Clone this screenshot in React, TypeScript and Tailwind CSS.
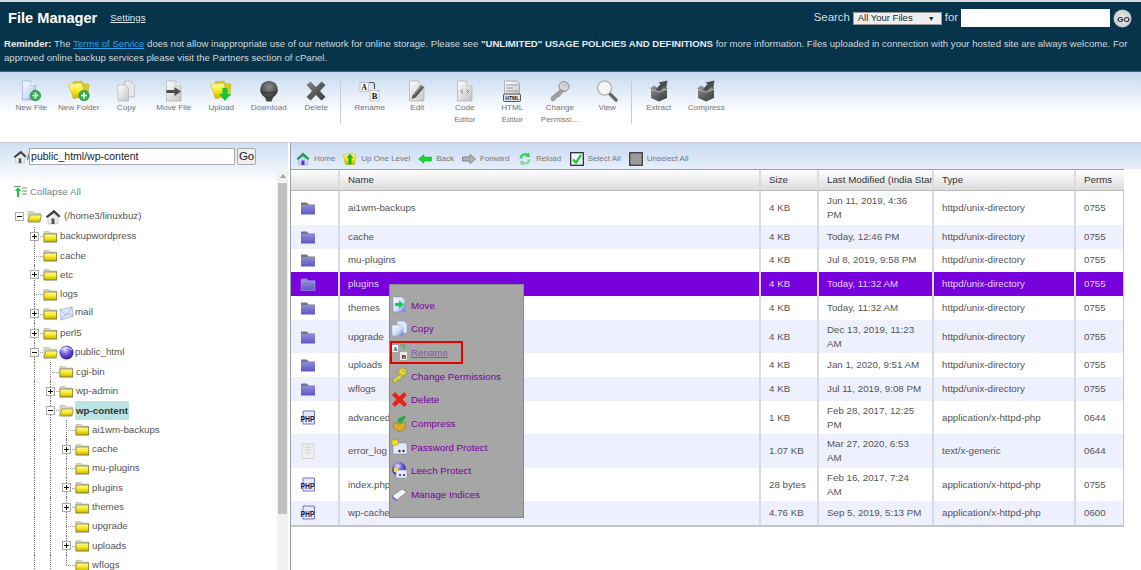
import type { ReactNode } from 'react';

const FONT = "font-['Liberation_Sans',Arial,sans-serif]";

function Defs() {
  return (
    <svg width="0" height="0" className="absolute">
      <defs>
        <linearGradient id="yel" x1="0" y1="0" x2="0" y2="1">
          <stop offset="0" stopColor="#fffbb0" />
          <stop offset="0.5" stopColor="#f6ea1c" />
          <stop offset="1" stopColor="#c9ae00" />
        </linearGradient>
        <linearGradient id="gry" x1="0" y1="0" x2="1" y2="1">
          <stop offset="0" stopColor="#8c8c8c" />
          <stop offset="0.5" stopColor="#5a5a5a" />
          <stop offset="1" stopColor="#3f3f3f" />
        </linearGradient>
        <linearGradient id="pap" x1="0" y1="0" x2="1" y2="1">
          <stop offset="0" stopColor="#ffffff" />
          <stop offset="1" stopColor="#c4c4c4" />
        </linearGradient>
        <linearGradient id="blupap" x1="0" y1="0" x2="1" y2="1">
          <stop offset="0" stopColor="#ffffff" />
          <stop offset="0.6" stopColor="#cfdcf6" />
          <stop offset="1" stopColor="#5a6fd0" />
        </linearGradient>
        <linearGradient id="pur" x1="0" y1="0" x2="0" y2="1">
          <stop offset="0" stopColor="#8d8ae0" />
          <stop offset="1" stopColor="#5f58bf" />
        </linearGradient>
        <radialGradient id="globe" cx="0.4" cy="0.3" r="0.8">
          <stop offset="0" stopColor="#dfe4ff" />
          <stop offset="0.45" stopColor="#6d55d8" />
          <stop offset="1" stopColor="#2d0d91" />
        </radialGradient>
        <radialGradient id="ball" cx="0.5" cy="0.35" r="0.7">
          <stop offset="0" stopColor="#8a8a8a" />
          <stop offset="1" stopColor="#303030" />
        </radialGradient>
        <radialGradient id="gobtn" cx="0.5" cy="0.5" r="0.6">
          <stop offset="0" stopColor="#ececec" />
          <stop offset="0.75" stopColor="#c9d2d4" />
          <stop offset="1" stopColor="#7f9ea8" />
        </radialGradient>
      </defs>
    </svg>
  );
}

function PlusBadge({ cx, cy }: { cx: number; cy: number }) {
  return (
    <g>
      <circle cx={cx} cy={cy} r="5.2" fill="#2fb24a" stroke="#1d7d33" strokeWidth="0.6" />
      <path d={`M${cx - 3} ${cy}h6M${cx} ${cy - 3}v6`} stroke="#fff" strokeWidth="1.7" />
    </g>
  );
}

function Page({ fill = 'url(#pap)', stroke = '#a5a5a5' }: { fill?: string; stroke?: string }) {
  return (
    <g>
      <path d="M3.500 1h9.500l5 5v15H3.500z" fill={fill} stroke={stroke} strokeWidth="0.6" />
      <path d="M13 1v5h5" fill="#eee" stroke={stroke} strokeWidth="0.5" />
    </g>
  );
}

function YellowFolder() {
  return (
    <g>
      <path d="M5 1.500L14 1l1 2.500 6 .500-1 12H7z" fill="#d8c930" stroke="#b5a410" strokeWidth="0.4" />
      <path d="M.500 4.500l13-1.500 4 12.500-12 3.500z" fill="url(#yel)" stroke="#c0ad10" strokeWidth="0.4" />
    </g>
  );
}

function ToolIcon({ name }: { name: string }) {
  const common = { width: 22, height: 22, viewBox: '0 0 22 22' };
  switch (name) {
    case 'newfile':
      return (
        <svg {...common}>
          <path d="M2.500 1h8.500l4.500 4.500V20h-13z" fill="url(#blupap)" stroke="#8795d8" strokeWidth="0.6" />
          <path d="M11 1v4.500h4.500" fill="#fff" stroke="#8795d8" strokeWidth="0.5" />
          <PlusBadge cx={15.5} cy={15.5} />
        </svg>
      );
    case 'newfolder':
      return (
        <svg {...common}>
          <YellowFolder />
          <PlusBadge cx={16} cy={15.5} />
        </svg>
      );
    case 'copy':
      return (
        <svg {...common}>
          <path d="M9.500 1h6l4 4v12h-10z" fill="#e7e7e7" stroke="#aaa" strokeWidth="0.6" />
          <path d="M3 5h7l3.500 3.500V21H3z" fill="url(#pap)" stroke="#aaa" strokeWidth="0.6" />
        </svg>
      );
    case 'move':
      return (
        <svg {...common}>
          <Page />
          <path d="M3.500 10h8V7l6.500 4.500L11.500 16v-3h-8z" fill="#4d4d4d" />
        </svg>
      );
    case 'upload':
      return (
        <svg {...common}>
          <YellowFolder />
          <path d="M12.500 8h5v6h3.500l-6 7-6-7h3.500z" fill="#19c43a" />
        </svg>
      );
    case 'download':
      return (
        <svg {...common}>
          <path d="M6 15h10l-2.500 6.500h-5z" fill="#444" />
          <circle cx="11" cy="9.500" r="8.800" fill="url(#ball)" />
          <path d="M2.500 11c3 2.500 14 2.500 17 0" stroke="#2b2b2b" strokeWidth="1" fill="none" />
        </svg>
      );
    case 'delete':
      return (
        <svg {...common}>
          <path d="M1.500 5l4-3.500L11 7l5.500-5.500 4 3.500-5.500 6 5.500 6-4 3.500L11 15l-5.500 5.500-4-3.500 5.500-6z" fill="url(#gry)" />
        </svg>
      );
    case 'rename':
      return (
        <svg {...common}>
          <rect x="1" y="2.500" width="8.500" height="9" fill="#f6f6f6" stroke="#999" strokeWidth="0.5" />
          <rect x="11" y="10.500" width="9" height="10.500" fill="#f6f6f6" stroke="#999" strokeWidth="0.5" />
          <path d="M10 2.500h3.500c1.500 0 2 1 2 2V9" fill="none" stroke="#555" strokeWidth="1.200" />
          <text x="2.500" y="9.500" fontSize="7.500" fontWeight="700" fill="#111" fontFamily="Liberation Serif">A</text>
          <text x="12.800" y="18.800" fontSize="8.500" fontWeight="700" fill="#111" fontFamily="Liberation Serif">B</text>
        </svg>
      );
    case 'edit':
      return (
        <svg {...common}>
          <Page />
          <path d="M5.500 19l1.200-4L15 5l3 2.500-8.300 10z" fill="#555" />
          <path d="M7.800 15l8-9" stroke="#ddd" strokeWidth="0.7" />
        </svg>
      );
    case 'code':
      return (
        <svg {...common}>
          <Page />
          <path d="M9 9.500l-2.200 2 2.200 2M12.500 9.500l2.200 2-2.200 2" fill="none" stroke="#666" strokeWidth="0.9" />
        </svg>
      );
    case 'html':
      return (
        <svg {...common}>
          <path d="M3.500 1h13l2 3v12h-15z" fill="url(#pap)" stroke="#888" strokeWidth="0.6" />
          <path d="M5 5h12M5 8h7M5 11h12" stroke="#888" strokeWidth="0.8" />
          <rect x="2.500" y="14" width="17" height="7.500" rx="1.200" fill="#e6e6e6" stroke="#444" strokeWidth="0.9" />
          <text x="4.300" y="19.800" fontSize="5" fontWeight="700" fill="#222" fontFamily="Liberation Sans">HTML</text>
        </svg>
      );
    case 'perm':
      return (
        <svg {...common}>
          <circle cx="15" cy="6.500" r="5" fill="#d5d5d5" stroke="#777" strokeWidth="0.8" />
          <circle cx="16.500" cy="5" r="1.300" fill="#fff" stroke="#777" strokeWidth="0.5" />
          <path d="M11.500 9.500L2 17.500l1 3.500 3-1 1-2.500 2.500-.5 5.500-6z" fill="#a0a0a0" stroke="#777" strokeWidth="0.6" />
        </svg>
      );
    case 'view':
      return (
        <svg {...common}>
          <path d="M13.500 13.500l6.500 6.500" stroke="#666" strokeWidth="3.400" strokeLinecap="round" />
          <circle cx="8.500" cy="8" r="7" fill="#f5f5f5" stroke="#b5b5b5" strokeWidth="1.400" />
        </svg>
      );
    default:
      return (
        <svg {...common}>
          <path d="M3 9.500l8 3 8-3v8.500l-8 3.500-8-3.500z" fill="url(#gry)" />
          <path d="M2 8.500l4-3 5 3 4-3 5 3-9 4z" fill="#8b8b8b" />
          <path d="M7.500 10l5-6-2-1.500 9-2-1.500 8.500-2-2-4 4z" fill="#4e4e4e" />
        </svg>
      );
  }
}

const tools1 = [
  ['newfile', 'New File'],
  ['newfolder', 'New Folder'],
  ['copy', 'Copy'],
  ['move', 'Move File'],
  ['upload', 'Upload'],
  ['download', 'Download'],
  ['delete', 'Delete'],
];
const tools2 = [
  ['rename', 'Rename'],
  ['edit', 'Edit'],
  ['code', 'Code|Editor'],
  ['html', 'HTML|Editor'],
  ['perm', 'Change|Permissi...'],
  ['view', 'View'],
];
const tools3 = [
  ['extract', 'Extract'],
  ['compress', 'Compress'],
];

function ToolGroup({ items }: { items: string[][] }) {
  return (
    <>
      {items.map(([icon, label]) => (
        <div key={label} className="flex w-[47.5px] flex-col items-center">
          <div className="flex h-[22px] w-[22px] items-center justify-center">
            <ToolIcon name={icon} />
          </div>
          {label.split('|').map((line) => (
            <div key={line} className="w-[47.5px] whitespace-nowrap text-center text-[8.125px] leading-[12px] text-[#777]">
              {line}
            </div>
          ))}
        </div>
      ))}
    </>
  );
}

function Folder({ open = false }: { open?: boolean }) {
  return (
    <svg width="15" height="13" viewBox="0 0 15 13" className="shrink-0">
      <path d="M1 3V1.500h5L7.500 3h6v9H1z" fill="#d9d9b5" stroke="#a5a58c" strokeWidth="0.5" />
      {open ? (
        <path d="M.8 12L3 5h11.500L12.500 12z" fill="url(#yel)" stroke="#8c8450" strokeWidth="0.7" />
      ) : (
        <rect x="1" y="4" width="12.700" height="8" fill="url(#yel)" stroke="#6f6a3a" strokeWidth="0.7" />
      )}
    </svg>
  );
}

function Toggle({ kind }: { kind: 'plus' | 'minus' }) {
  return (
    <div className="flex h-[9px] w-[9px] items-center justify-center border border-[#aaa] bg-white">
      <svg width="7" height="7" viewBox="0 0 7 7">
        <path d={kind === 'plus' ? 'M1 3.500h5M3.500 1v5' : 'M1 3.500h5'} stroke="#111" strokeWidth="1" />
      </svg>
    </div>
  );
}

function Guide() {
  return (
    <div className="flex h-full w-4 shrink-0 justify-center">
      <div className="h-full border-l border-dotted border-[#777]" />
    </div>
  );
}

function TreeRow({ depth, kind, label, last = false, open = false, active = false, raised = false, extra }: {
  depth: number;
  kind: 'plus' | 'minus' | 'none';
  label: string;
  last?: boolean;
  open?: boolean;
  active?: boolean;
  raised?: boolean;
  extra?: ReactNode;
}) {
  return (
    <div className="flex h-[19.35px] items-center">
      {Array.from({ length: depth }).map((_, i) => (
        <Guide key={i} />
      ))}
      <div className="relative flex h-full w-4 shrink-0 items-center justify-center">
        <div className={`absolute left-[7.5px] top-0 border-l border-dotted border-[#777] ${last ? 'h-1/2' : 'h-full'}`} />
        <div className="absolute left-[8px] top-1/2 w-[9px] border-t border-dotted border-[#999]" />
        {kind !== 'none' && (
          <div className="relative">
            <Toggle kind={kind} />
          </div>
        )}
      </div>
      <div className="ml-[1px] flex items-center">
        <Folder open={open} />
      </div>
      {extra}
      <span
        className={`text-[9.75px] ${raised ? '-mt-[3px]' : ''} ${
          active
            ? 'ml-[1px] h-[19px] rounded-[1px] bg-[#bce3e3] px-[1px] font-bold leading-[19px] text-[#333]'
            : extra
              ? 'ml-[1px] leading-[14px] text-[#555]'
              : 'ml-[2px] leading-[14px] text-[#555]'
        }`}
      >
        {label}
      </span>
    </div>
  );
}

const treeRows = [
  { depth: 0, kind: 'plus', label: 'backupwordpress' },
  { depth: 0, kind: 'none', label: 'cache' },
  { depth: 0, kind: 'plus', label: 'etc' },
  { depth: 0, kind: 'none', label: 'logs' },
  { depth: 0, kind: 'plus', label: 'mail', extra: 'mail' },
  { depth: 0, kind: 'plus', label: 'perl5' },
  { depth: 0, kind: 'minus', label: 'public_html', open: true, extra: 'globe' },
  { depth: 1, kind: 'none', label: 'cgi-bin' },
  { depth: 1, kind: 'plus', label: 'wp-admin' },
  { depth: 1, kind: 'minus', label: 'wp-content', open: true, active: true },
  { depth: 2, kind: 'none', label: 'ai1wm-backups' },
  { depth: 2, kind: 'plus', label: 'cache' },
  { depth: 2, kind: 'none', label: 'mu-plugins' },
  { depth: 2, kind: 'plus', label: 'plugins' },
  { depth: 2, kind: 'plus', label: 'themes' },
  { depth: 2, kind: 'none', label: 'upgrade' },
  { depth: 2, kind: 'plus', label: 'uploads' },
  { depth: 2, kind: 'none', label: 'wflogs', last: true },
] as const;

function House({ size = 14 }: { size?: number }) {
  return (
    <svg width={size} height={size} viewBox="0 0 16 16" className="shrink-0">
      <path d="M3 8l5-4 5 4v7H3z" fill="#ececec" stroke="#aaa" strokeWidth="0.5" />
      <path d="M9 .800L.800 7.500l1.400 1.500L9 4l5 4.500 1.500-1.500z" fill="#3f3f3f" />
      <rect x="6.500" y="9.500" width="3" height="5.500" fill="#555" />
    </svg>
  );
}

function Envelope() {
  return (
    <svg width="15" height="15" viewBox="0 0 16 16" className="ml-[1px] shrink-0">
      <path d="M1 4l13-3 1 10-13 4z" fill="#dfe6f5" stroke="#98a6c9" strokeWidth="0.7" />
      <path d="M1 4l7 6 6-9M2 15l5-6M15 11L9 8" fill="none" stroke="#98a6c9" strokeWidth="0.7" />
    </svg>
  );
}

function Globe() {
  return (
    <svg width="15" height="15" viewBox="0 0 15 15" className="ml-[1px] shrink-0">
      <circle cx="7.500" cy="7.500" r="7" fill="url(#globe)" />
      <path d="M2 5c3-3 8-3 11 0" fill="none" stroke="#fff" strokeWidth="1" opacity="0.8" />
    </svg>
  );
}

function NavIcon({ name }: { name: string }) {
  const common = { width: 14, height: 14, viewBox: '0 0 14 14' };
  switch (name) {
    case 'home':
      return (
        <svg {...common}>
          <path d="M2.500 7.500L7 4l4.500 3.500V13h-9z" fill="#cfd5f2" stroke="#8d95cc" strokeWidth="0.5" />
          <path d="M7 .500L.500 6.500 2 8l5-4 5 4 1.500-1.500z" fill="#1f9e57" />
          <rect x="5.500" y="8.500" width="3" height="4.500" fill="#4b39c9" />
        </svg>
      );
    case 'up':
      return (
        <svg {...common}>
          <path d="M.500 3l7-2 5 2-1 9.500h-9z" fill="url(#yel)" stroke="#b9a400" strokeWidth="0.5" />
          <path d="M7 1.500l3.500 4.500H8.500v6.500h-3V6H3.500z" fill="#15b52f" />
        </svg>
      );
    case 'back':
      return (
        <svg {...common}>
          <path d="M.500 7L6 2.500V5h7.500v4H6v2.500z" fill="#0fdc2a" stroke="#0a9b1e" strokeWidth="0.4" />
        </svg>
      );
    case 'forward':
      return (
        <svg {...common}>
          <path d="M13.500 7L8 2.500V5H.500v4H8v2.500z" fill="#b3b3b3" stroke="#666" strokeWidth="0.7" />
        </svg>
      );
    case 'reload':
      return (
        <svg {...common}>
          <path d="M1.500 6.500c0-3.500 3.500-6 8-5L11 .500 12 5H7.500l1-1.500C6 3 4 4 4 6.500z" fill="#2ed060" />
          <path d="M12.500 7.500c0 3.500-3.500 6-8 5L3 13.500 2 9h4.500l-1 1.500c2.500.5 4.500-.5 4.500-3z" fill="#7fdf9c" />
        </svg>
      );
    case 'check':
      return (
        <svg {...common}>
          <rect x=".7" y=".7" width="12.600" height="12.600" fill="#f1f3fb" stroke="#222" strokeWidth="1.200" />
          <path d="M3 7.500l3 3 5-7.500" fill="none" stroke="#12c92c" strokeWidth="2.200" />
        </svg>
      );
    default:
      return (
        <svg {...common}>
          <rect x=".7" y=".7" width="12.600" height="12.600" fill="#9a9a9a" stroke="#333" strokeWidth="1.200" />
        </svg>
      );
  }
}

const navItems = [
  ['home', 'Home', 'mr-[8px]'],
  ['up', 'Up One Level', 'mr-[8px]'],
  ['back', 'Back', 'mr-[8px]'],
  ['forward', 'Forward', 'mr-[8.5px]'],
  ['reload', 'Reload', 'mr-[8.5px]'],
  ['check', 'Select All', 'mr-[8px]'],
  ['box', 'Unselect All', ''],
];

function RowIcon({ type, selected }: { type: string; selected?: boolean }) {
  if (type === 'folder') {
    return (
      <svg width="16" height="14" viewBox="0 0 16 14">
        <path d="M1 13V1.500h6l1.500 2H15V13z" fill={selected ? '#8f86c9' : '#777'} />
        <rect x="1" y="4" width="14" height="9.500" fill="url(#pur)" stroke={selected ? '#a9a2de' : 'none'} strokeWidth="0.6" />
      </svg>
    );
  }
  if (type === 'php') {
    return (
      <svg width="16" height="16" viewBox="0 0 16 16">
        <path d="M3 1h11.500v13H3z" fill="#e7e9fb" stroke="#6f76d5" strokeWidth="1" />
        <text x=".5" y="11.500" fontSize="8.500" fontWeight="700" fill="#14184f" fontFamily="Liberation Sans" textLength="14" lengthAdjust="spacingAndGlyphs">PHP</text>
      </svg>
    );
  }
  return (
    <svg width="16" height="16" viewBox="0 0 16 16">
      <rect x="2" y="1" width="12" height="14.500" fill="#efefef" stroke="#d2d2d2" strokeWidth="0.9" />
      <path d="M5 4h6M5 7h6M5 10h6" stroke="#cfcfcf" strokeWidth="1" />
    </svg>
  );
}

const files = [
  { icon: 'folder', name: 'ai1wm-backups', size: '4 KB', date: 'Jun 11, 2019, 4:36 PM', type: 'httpd/unix-directory', perms: '0755', h: 'h-[34px]' },
  { icon: 'folder', name: 'cache', size: '4 KB', date: 'Today, 12:46 PM', type: 'httpd/unix-directory', perms: '0755', h: 'h-[23.5px]' },
  { icon: 'folder', name: 'mu-plugins', size: '4 KB', date: 'Jul 8, 2019, 9:58 PM', type: 'httpd/unix-directory', perms: '0755', h: 'h-[23.5px]' },
  { icon: 'folder', name: 'plugins', size: '4 KB', date: 'Today, 11:32 AM', type: 'httpd/unix-directory', perms: '0755', h: 'h-[24px]', selected: true },
  { icon: 'folder', name: 'themes', size: '4 KB', date: 'Today, 11:32 AM', type: 'httpd/unix-directory', perms: '0755', h: 'h-[24px]' },
  { icon: 'folder', name: 'upgrade', size: '4 KB', date: 'Dec 13, 2019, 11:23 AM', type: 'httpd/unix-directory', perms: '0755', h: 'h-[33px]' },
  { icon: 'folder', name: 'uploads', size: '4 KB', date: 'Jan 1, 2020, 9:51 AM', type: 'httpd/unix-directory', perms: '0755', h: 'h-[24px]' },
  { icon: 'folder', name: 'wflogs', size: '4 KB', date: 'Jul 11, 2019, 9:08 PM', type: 'httpd/unix-directory', perms: '0755', h: 'h-[24px]' },
  { icon: 'php', name: 'advanced-cache.php', size: '1 KB', date: 'Feb 28, 2017, 12:25 PM', type: 'application/x-httpd-php', perms: '0644', h: 'h-[33px]' },
  { icon: 'txt', name: 'error_log', size: '1.07 KB', date: 'Mar 27, 2020, 6:53 AM', type: 'text/x-generic', perms: '0644', h: 'h-[34px]' },
  { icon: 'php', name: 'index.php', size: '28 bytes', date: 'Feb 16, 2017, 7:24 AM', type: 'application/x-httpd-php', perms: '0755', h: 'h-[33px]' },
  { icon: 'php', name: 'wp-cache-config.php', size: '4.76 KB', date: 'Sep 5, 2019, 5:13 PM', type: 'application/x-httpd-php', perms: '0600', h: 'h-[24px]' },
];

const GRID = 'grid grid-cols-[47px_421px_58px_115px_142px_50px]';
const CELL = 'flex h-full items-center whitespace-nowrap border-l-2 border-[#d9d9e6] pl-[8px]';

function MenuIcon({ name }: { name: string }) {
  const common = { width: 17, height: 17, viewBox: '0 0 17 17' };
  switch (name) {
    case 'move':
      return (
        <svg {...common}>
          <path d="M2 1h9l3 3v12H2z" fill="url(#blupap)" stroke="#7f8fd8" strokeWidth="0.6" />
          <path d="M4 7h4V4.500l5 4-5 4V10H4z" fill="#0fd24a" />
        </svg>
      );
    case 'copy':
      return (
        <svg {...common}>
          <path d="M6 1h7l3 3v9H6z" fill="#dfe8fb" stroke="#8d9de0" strokeWidth="0.6" />
          <path d="M1 5h8l3 3v8H1z" fill="url(#blupap)" stroke="#8d9de0" strokeWidth="0.6" />
        </svg>
      );
    case 'rename':
      return (
        <svg {...common}>
          <rect x="1" y="1" width="6" height="7" fill="#fff" />
          <rect x="9" y="8" width="7" height="8" fill="#e9e9e9" />
          <path d="M9 1h4v4" fill="none" stroke="#22b455" strokeWidth="1.200" />
          <text x="2" y="7" fontSize="6" fontWeight="700" fill="#222" fontFamily="Liberation Serif">A</text>
          <text x="10.500" y="14.500" fontSize="7" fontWeight="700" fill="#222" fontFamily="Liberation Serif">B</text>
        </svg>
      );
    case 'perm':
      return (
        <svg {...common}>
          <circle cx="11.500" cy="5" r="4" fill="#e8d437" stroke="#8c7b10" strokeWidth="0.5" />
          <circle cx="12.500" cy="4" r="1" fill="#a6a6a6" />
          <path d="M9 7.500L2 13l1 3 2.500-1 .5-2 2-.5 4-4z" fill="#efdd35" stroke="#8c7b10" strokeWidth="0.5" />
        </svg>
      );
    case 'delete':
      return (
        <svg {...common}>
          <path d="M1 4l3-3 4.500 4.500L13 1l3 3-4.500 4.500L16 13l-3 3-4.500-4.500L4 16l-3-3 4.500-4.500z" fill="#e52417" />
        </svg>
      );
    case 'compress':
      return (
        <svg {...common}>
          <path d="M2 7l6.500 2L15 7l-1 7-5.500 2.500L3 14z" fill="#d6ad2c" stroke="#8a6a10" strokeWidth="0.5" />
          <path d="M6 7c1-4 4-6 9-6l-2 4-3 3z" fill="#1faf3c" />
        </svg>
      );
    case 'password':
      return (
        <svg {...common}>
          <rect x="2" y="5" width="14" height="11" rx="1.500" fill="#e5eafa" stroke="#7f8bc5" strokeWidth="0.6" />
          <circle cx="8.500" cy="13" r="1.200" fill="#333" />
          <circle cx="12.500" cy="13" r="1.200" fill="#333" />
          <rect x="1" y="2" width="6" height="5" fill="#f1e62d" stroke="#9b8f10" strokeWidth="0.5" />
        </svg>
      );
    case 'leech':
      return (
        <svg {...common}>
          <circle cx="8" cy="7" r="7" fill="url(#globe)" />
          <rect x="5" y="8" width="11" height="8" rx="1" fill="#e5eafa" stroke="#7f8bc5" strokeWidth="0.6" />
          <circle cx="9" cy="13" r="1.100" fill="#333" />
          <circle cx="13" cy="13" r="1.100" fill="#333" />
          <rect x="3" y="6" width="4" height="4" fill="#f1e62d" />
        </svg>
      );
    default:
      return (
        <svg {...common}>
          <path d="M1 10l10-7 5 3-10 8z" fill="#f2f2f2" stroke="#666" strokeWidth="0.6" />
          <path d="M1 10l5 4v1.500L1 12z" fill="#7c5fd0" />
        </svg>
      );
  }
}

const menuItems = [
  ['move', 'Move'],
  ['copy', 'Copy'],
  ['rename', 'Rename'],
  ['perm', 'Change Permissions'],
  ['delete', 'Delete'],
  ['compress', 'Compress'],
  ['password', 'Password Protect'],
  ['leech', 'Leech Protect'],
  ['index', 'Manage Indices'],
];

export default function App() {
  return (
    <div className={`${FONT} relative h-[570px] w-[1141px] overflow-hidden bg-white`}>
      <Defs />

      {/* top banner */}
      <div className="h-[72px] border-b border-t-2 border-b-[#3d6374] border-t-[#d8dcdf] bg-[#07344a]">
        <div className="flex h-[30px] items-center justify-between pl-[8px] pr-[9px] pt-[2px]">
          <div className="flex items-center">
            <span className="text-[14.625px] font-bold leading-[18px] text-white">File Manager</span>
            <a className="ml-[13px] text-[9.75px] text-[#dde6ea] underline">Settings</a>
          </div>
          <div className="flex items-center text-[11.375px] text-[#d5dfe4]">
            <span>Search</span>
            <div className="ml-[3px] flex h-[13px] w-[89px] items-center justify-between border border-[#999] bg-[#efefef] pl-[4px] pr-[6px] text-[9.5px] text-[#222]">
              <span>All Your Files</span>
              <span className="text-[7px] leading-none">▼</span>
            </div>
            <span className="ml-[3px]">for</span>
            <div className="ml-[3px] h-[18px] w-[149px] bg-white" />
            <svg width="19" height="19" viewBox="0 0 19 19" className="ml-[3px]">
              <circle cx="9.500" cy="9.500" r="9" fill="url(#gobtn)" />
              <text x="4.300" y="12.500" fontSize="8" fontWeight="700" fill="#222" fontFamily="Liberation Sans">GO</text>
            </svg>
          </div>
        </div>
        <p className="mt-[5px] px-[4px] text-[9.6px] leading-[14px] text-[#ccd8de]">
          <b className="text-[#e3eaee]">Reminder:</b> The <a className="text-[#2aa0e6] underline">Terms of Service</a> does not allow inappropriate use of our network for online storage. Please see <b className="text-[#e3eaee]">"UNLIMITED" USAGE POLICIES AND DEFINITIONS</b> for more information. Files uploaded in connection with your hosted site are always welcome. For approved online backup services please visit the Partners section of cPanel.
        </p>
      </div>

      {/* toolbar */}
      <div className="flex h-[71px] items-start border-b border-[#c9ced6] bg-gradient-to-b from-[#c8daf1] via-white via-[60%] to-white pl-[7.5px] pt-[8px]">
        <ToolGroup items={tools1} />
        <div className="mr-[5px] mt-[1px] h-[43px] w-px bg-[#ccc]" />
        <ToolGroup items={tools2} />
        <div className="mr-[3px] mt-[1px] h-[43px] w-px bg-[#ccc]" />
        <ToolGroup items={tools3} />
      </div>

      {/* main */}
      <div className="flex h-[427px]">
        {/* left tree */}
        <div className="relative h-full w-[288px] shrink-0">
          <div className="h-[40px] bg-gradient-to-b from-[#cfdff3] to-white pl-[13px] pt-[5px]">
            <div className="flex items-center">
              <House size={14} />
              <span className="text-[11px] leading-[17px] text-[#444]">/</span>
              <div className="-ml-[1px] flex h-[17px] w-[206px] items-center border border-[#aaa] bg-white pl-[1px] text-[10.5px] text-[#222]">public_html/wp-content</div>
              <div className="ml-[2px] flex h-[17px] w-[19px] items-center justify-center rounded-[2px] border border-[#aaa] bg-[#eee] text-[11.5px] text-[#222]">Go</div>
            </div>
          </div>
          <div className="mt-[2px] flex items-center pl-[14px] text-[9.75px] text-[#7a7f8a]">
            <svg width="13" height="12" viewBox="0 0 13 12">
              <path d="M4 1l3 4H5v6H3V5H1z" fill="#11cc33" />
              <path d="M0 .5h7M8 2h5M8 5h5M8 8h5" stroke="#666" strokeWidth="0.8" />
            </svg>
            <span className="ml-[3px]">Collapse All</span>
          </div>
          <div className="mt-[10px] flex h-[14px] items-center pl-[15px]">
            <Toggle kind="minus" />
            <div className="ml-[3px]">
              <Folder open />
            </div>
            <div className="ml-[3px]">
              <House size={16} />
            </div>
            <span className="ml-[3px] text-[9.75px] text-[#555]">(/home3/linuxbuz)</span>
          </div>
          <div className="pl-[26px] pt-[3px]">
            {treeRows.map((row, i) => (
              <TreeRow
                key={i}
                depth={row.depth}
                kind={row.kind}
                label={row.label}
                last={'last' in row}
                open={'open' in row}
                active={'active' in row}
                raised={row.label === 'mail'}
                extra={'extra' in row ? row.extra === 'mail' ? <Envelope /> : <Globe /> : undefined}
              />
            ))}
          </div>
          {/* scrollbar */}
          <div className="absolute bottom-0 right-0 top-[27px] flex w-[11px] flex-col items-center bg-[#f1f1f1]">
            <div className="mt-[4px] h-0 w-0 border-x-[3.5px] border-b-[4px] border-x-transparent border-b-[#a3a3a3]" />
            <div className="mt-[5px] h-[331px] w-[9px] bg-[#c1c1c1]" />
          </div>
        </div>

        {/* right file list */}
        <div className="ml-[2px] h-full min-w-0 flex-1 border-l border-[#9aa0a8]">
          <div className="flex h-[26px] items-center bg-gradient-to-b from-[#c9daf1] to-[#e6eefa] pl-[5px] pt-[6px] text-[8px] text-[#777]">
            {navItems.map(([icon, label, gap]) => (
              <div key={label} className={`flex items-center ${gap}`}>
                <NavIcon name={icon} />
                <span className="ml-[4px]">{label}</span>
              </div>
            ))}
          </div>
          <div className="w-[833px] border-t border-[#9aa0a8]">
            <div className={`${GRID} h-[21px] border-b border-[#bbb] bg-gradient-to-b from-white to-[#dcdcdc] text-[9.75px] text-[#333]`}>
              <div />
              <div className="flex h-full items-center border-l-2 border-[#ddd] pl-[8px]">Name</div>
              <div className="flex h-full items-center border-l-2 border-[#ddd] pl-[8px]">Size</div>
              <div className="flex h-full items-center overflow-hidden whitespace-nowrap border-l-2 border-[#ddd] pl-[8px]">Last Modified (India Standard Time)</div>
              <div className="flex h-full items-center border-l-2 border-[#ddd] pl-[8px]">Type</div>
              <div className="flex h-full items-center border-l-2 border-[#ddd] pl-[8px]">Perms</div>
            </div>
            <div className="border-b-2 border-r border-[#c4c4cc]">
              {files.map((f, i) => (
                <div
                  key={f.name}
                  className={`${GRID} ${f.h} items-center text-[9.75px] leading-[14px] ${
                    f.selected ? 'bg-[#7700dd] text-[#e2d4f6]' : i % 2 === 1 ? 'bg-[#eef0fd] text-[#555]' : 'bg-white text-[#555]'
                  }`}
                >
                  <div className="flex h-full items-center pl-[9px]">
                    <RowIcon type={f.icon} selected={f.selected} />
                  </div>
                  <div className={CELL}>{f.name}</div>
                  <div className={CELL}>{f.size}</div>
                  <div className="flex h-full items-center border-l-2 border-[#d9d9e6] pl-[8px] pr-[8px]">{f.date}</div>
                  <div className={CELL}>{f.type}</div>
                  <div className={CELL}>{f.perms}</div>
                </div>
              ))}
            </div>
          </div>
        </div>
      </div>

      {/* context menu */}
      <div className="absolute left-[389px] top-[284px] flex h-[234px] w-[135px] flex-col border border-[#8a8a8a] bg-[#a6a6a6] pl-[1px] pt-[9px]">
        {menuItems.map(([icon, label]) => (
          <div key={label} className="relative flex h-[23.7px] items-center">
            <div className="-mt-[2px] flex w-[17px] justify-center">
              <MenuIcon name={icon} />
            </div>
            <span className={`ml-[3px] text-[9.75px] ${icon === 'rename' ? 'text-[#8a55b5] underline' : 'text-[#76009f]'}`}>{label}</span>
            {icon === 'rename' && <div className="absolute left-[-1px] top-0 h-[23px] w-[73px] border-2 border-[#e60000]" />}
          </div>
        ))}
      </div>
    </div>
  );
}
